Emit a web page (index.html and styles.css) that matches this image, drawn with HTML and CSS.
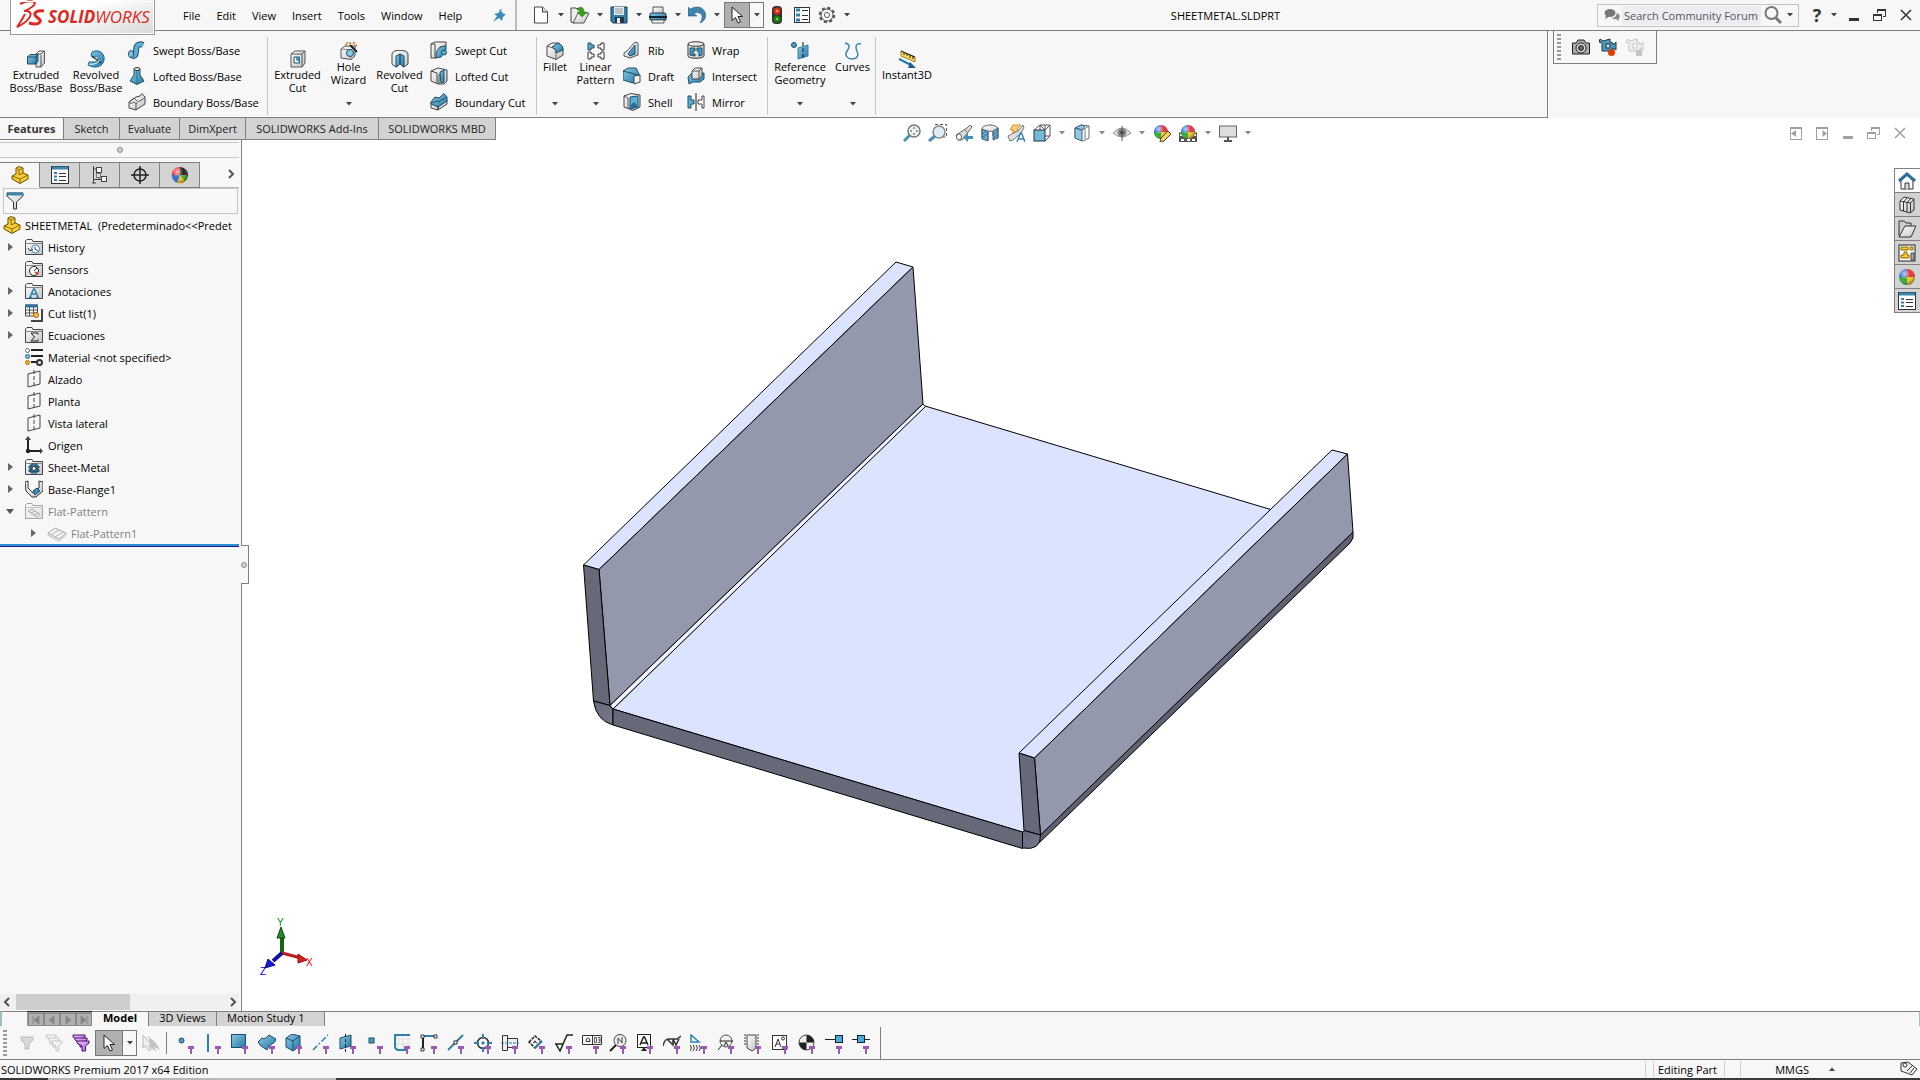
FILE: index.html
```html
<!DOCTYPE html>
<html lang="en">
<head>
<meta charset="utf-8">
<title>SHEETMETAL.SLDPRT</title>
<link rel="stylesheet" href="styles.css">
</head>
<body>
<svg class="sprite" aria-hidden="true">
<defs>
<linearGradient id="gb" x1="0" y1="0" x2="1" y2="1"><stop offset="0" stop-color="#8cc8e4"/><stop offset="1" stop-color="#2478a4"/></linearGradient>
<linearGradient id="gg" x1="0" y1="0" x2="1" y2="1"><stop offset="0" stop-color="#ffffff"/><stop offset="1" stop-color="#c4c4c4"/></linearGradient>
<linearGradient id="gp" x1="0" y1="0" x2="1" y2="1"><stop offset="0" stop-color="#e8c0fa"/><stop offset="1" stop-color="#b060d8"/></linearGradient>
<radialGradient id="shade" cx=".35" cy=".3" r=".75"><stop offset="0" stop-color="#fff" stop-opacity=".7"/><stop offset=".5" stop-color="#fff" stop-opacity="0"/><stop offset="1" stop-color="#000" stop-opacity=".5"/></radialGradient>
<symbol id="funnel" viewBox="0 0 6 8"><path d="M0 0H6V3H4V8H2V3H0Z" fill="#9b59b6"/></symbol>
<symbol id="caret" viewBox="0 0 6 4"><path d="M0 0H6L3 3.500Z" fill="currentColor"/></symbol>
<symbol id="pin" viewBox="0 0 18 18"><path d="M8 4L11 3L10 5L13 8L15 8L12 11L11 15L8 12L2 16L6 10L3 8L7 7L9 5Z" transform="translate(-2 0)" fill="#3c8fb8"/></symbol>
<symbol id="extrude" viewBox="0 0 18 18"><path d="M9 4L12 1H17.500V13L14 17H9Z" fill="url(#gg)" stroke="#555"/><path d="M14 5V17M9 4H14L17 1" fill="none" stroke="#555"/><path d="M.500 7L3 4.500H11L11 11L9 14H.500Z" fill="url(#gb)" stroke="#1c4f6b"/><path d="M.500 7H9V14M9 7L11 4.500" fill="none" stroke="#1c4f6b"/></symbol>
<symbol id="revolve" viewBox="0 0 18 18"><path d="M4 5A4 4 0 0 1 8 1C14 0 18 5 17 10C16 17 8 19 1 15L2 12L7 12C12 12 12 7 9 6L6 8Z" fill="url(#gb)" stroke="#1c6a90"/><path d="M5 6L14 13" stroke="#333" stroke-width="1.500"/><path d="M2 14C6 15 12 13 12 10" stroke="#fff" fill="none"/></symbol>
<symbol id="sweep" viewBox="0 0 18 18"><path d="M3 14C10 18 7 7 9 5C10 3 13 3 15 4" fill="none" stroke="#1c4f6b" stroke-width="6"/><path d="M3 14C10 18 7 7 9 5C10 3 13 3 15 4" fill="none" stroke="#5caed2" stroke-width="4"/><ellipse cx="3" cy="13" rx="2.500" ry="3.500" fill="#8cc8e4" stroke="#1c4f6b"/></symbol>
<symbol id="loft" viewBox="0 0 18 18"><path d="M6 2H12V8L16 14L9 17.500L2 14L6 8Z" fill="url(#gb)" stroke="#1c4f6b"/><path d="M9 4V17" stroke="#2a6f94"/><ellipse cx="9" cy="2" rx="3" ry="1.500" fill="#eee" stroke="#333"/></symbol>
<symbol id="boundary" viewBox="0 0 18 18"><path d="M1 9L8 4L12 3L14 .500L17 4V11L8 17L1 15Z" fill="url(#gg)" stroke="#444"/><path d="M1 9C4 13 6 6 8 11C10 7 13 9 17 4M8 11V17M2 8L6 5L9 8" fill="none" stroke="#555"/></symbol>
<symbol id="cutextrude" viewBox="0 0 18 18"><path d="M2 4L6 1H16V13L13 17H2Z" fill="url(#gg)" stroke="#555"/><path d="M2 4H13V17M13 4L16 1" fill="none" stroke="#555"/><path d="M5 7H10.500V13H5Z" fill="#fff" stroke="#1c4f6b"/><path d="M7 7H10.500V12L7 10Z" fill="#3c90b8"/></symbol>
<symbol id="wizard" viewBox="0 0 18 18"><path d="M1 7L5 4H15V14L11 17.500L1 16Z" fill="url(#gg)" stroke="#555"/><path d="M1 7L11 8V17M11 8L15 4" fill="none" stroke="#888"/><circle cx="10" cy="11" r="3.500" fill="#8cc8e4" stroke="#1c4f6b"/><path d="M10 3L17 10" stroke="#222" stroke-width="2"/><path d="M6 1H8M10 0V2M13 2L15 0M5 3H7M15 4L17 3" stroke="#e07020" stroke-width="1.500"/></symbol>
<symbol id="cutrevolve" viewBox="0 0 18 18"><path d="M1 4C1 -1 17 -1 17 4V14Q15 16 12 17V8L9 6L6 8V17Q2 16 1 14Z" fill="url(#gg)" stroke="#444"/><path d="M5 6L9 4V14L5 17ZM9 4L13 6V17L9 14Z" fill="url(#gb)" stroke="#1c4f6b"/></symbol>
<symbol id="cutsweep" viewBox="0 0 18 18"><path d="M1 3L5 1H16V5L10 6L6 17H1Z" fill="url(#gg)" stroke="#444"/><path d="M6 16C6 9 9 5 16 5V9L11 16L6 17Z" fill="url(#gb)" stroke="#1c4f6b"/><path d="M1 3H5V17" fill="none" stroke="#444"/><circle cx="14" cy="11.500" r="2.500" fill="#5caed2" stroke="#1c4f6b"/></symbol>
<symbol id="cutloft" viewBox="0 0 18 18"><path d="M1 4L8 1L17 3V14L14 17L8 17L1 14Z" fill="url(#gg)" stroke="#444"/><path d="M1 4L7 6V16M12 5L9 8V17" fill="none" stroke="#444"/><path d="M10 5L14 3L14 15L11 16Z" fill="url(#gb)" stroke="#1c4f6b"/></symbol>
<symbol id="cutboundary" viewBox="0 0 18 18"><path d="M1 9L8 14V17L1 15ZM8 14L17 7V11L8 17Z" fill="url(#gg)" stroke="#444"/><path d="M1 9L5 4L9 5L14 .500L17 4V8L8 14L1 11Z" fill="url(#gb)" stroke="#1c4f6b"/><path d="M2 9C5 11 6 6 9 9C11 6 13 7 16 4" fill="none" stroke="#1c4f6b"/></symbol>
<symbol id="fillet" viewBox="0 0 18 18"><path d="M1 4L6 1L12 1Q17 3 17 8V13L10 17.500L1 14Z" fill="url(#gg)" stroke="#444"/><path d="M6 5L12 1Q17 3 17 8L10 11Q10 6 6 5Z" fill="url(#gb)" stroke="#1c4f6b"/><path d="M1 4L7 6Q10 7 10 11V17" fill="none" stroke="#666"/></symbol>
<symbol id="pattern" viewBox="0 0 18 18"><path d="M1 1H4V3H7V6H4V8H1Z" fill="#5caed2" stroke="#1c4f6b"/><path d="M17 1H14V3H11V6H14V8H17ZM1 10H4V12H7V15H4V17H1ZM17 10H14V12H11V15H14V17H17Z" fill="#fff" stroke="#333"/></symbol>
<symbol id="rib" viewBox="0 0 18 18"><path d="M1 12L4 10L12 1L15 2V14L7 17L1 15Z" fill="url(#gg)" stroke="#555"/><path d="M5 13L12 4V13L7 15Z" fill="url(#gb)" stroke="#1c4f6b"/></symbol>
<symbol id="draft" viewBox="0 0 18 18"><path d="M0 4L5 1L13 1L17 9L10 16L0 13Z" fill="url(#gb)" stroke="#1c4f6b"/><path d="M0 4L8 6L17 9" fill="none" stroke="#1c4f6b"/><path d="M11 9L17 8V15L11 17Z" fill="#f4f4f4" stroke="#444"/></symbol>
<symbol id="shell" viewBox="0 0 18 18"><path d="M1 3L8 .500L17 2V14L10 17.500L1 14Z" fill="url(#gg)" stroke="#444"/><path d="M7 4L15 3V14L7 16Z" fill="#5caed2" stroke="#1c4f6b"/><path d="M7 13L11 9L15 14L8 16Z" fill="#246f98"/><path d="M1 3L5 5V16" fill="none" stroke="#555"/></symbol>
<symbol id="wrap" viewBox="0 0 18 18"><path d="M1 3C1 0 17 0 17 3V15C17 18 1 18 1 15Z" fill="url(#gg)" stroke="#333"/><path d="M1 3C1 6 17 6 17 3" fill="none" stroke="#333"/><path d="M3 7H8V10H6V13H8V15L3 14ZM10 7H15V14L12 15V10H10Z" fill="#4c9cc0" stroke="#1c4f6b"/></symbol>
<symbol id="intersect" viewBox="0 0 18 18"><path d="M1 10L5 6H17V12L13 15H6L2 17Z" fill="url(#gb)" stroke="#1c4f6b"/><path d="M5 4L8 1H15V9L12 12H5Z" fill="url(#gg)" stroke="#444"/><path d="M5 4H12V12M12 4L15 1" fill="none" stroke="#555"/></symbol>
<symbol id="mirror" viewBox="0 0 18 18"><path d="M1 3H4V7H7V11H4V15H1Z" fill="#5caed2" stroke="#1c4f6b"/><path d="M17 3H15V7H11V11H15V15H17Z" fill="#fff" stroke="#444"/><path d="M9 0V18" stroke="#222"/></symbol>
<symbol id="refgeo" viewBox="0 0 18 18"><circle cx="3" cy="3" r="2.500" fill="#4c9cc0" stroke="#1c4f6b"/><path d="M7 6L17 3V14L7 17Z" fill="url(#gb)" stroke="#3c80a4"/><path d="M12 0V18" stroke="#111" stroke-dasharray="4 2"/></symbol>
<symbol id="curves" viewBox="0 0 18 18"><path d="M1 1C6 2 6 5 3 9C0 14 4 17 8 17C13 17 15 14 13 9C11 4 12 1 17 2" fill="none" stroke="#3a86b4" stroke-width="1.500"/></symbol>
<symbol id="instant" viewBox="0 0 18 18"><path d="M3 1L17 7V12L3 6Z" fill="#f8d860" stroke="#a08020"/><path d="M3 1L17 7M6 3V5M9 4V6M12 5V8M15 6V9" stroke="#222"/><path d="M1 9L13 15" stroke="#2478a4" stroke-width="2"/><path d="M12 12L18 18H10Z" fill="#1c5f88"/></symbol>
<symbol id="new" viewBox="0 0 18 18"><path d="M2.500 1H10.500L15.500 6V17H2.500Z" fill="#fff" stroke="#444"/><path d="M10.500 1V6H15.500" fill="#ddd" stroke="#444"/></symbol>
<symbol id="open" viewBox="0 0 20 18"><path d="M1 16V2H6L8 4H12V8L4 17Z" fill="#eee" stroke="#444"/><path d="M3 17L8 7H19L14 17Z" fill="url(#gg)" stroke="#555"/><path d="M8 2C12 0 14 2 14 6H17L12 11L7 6H10C10 4 9 3 7 3Z" fill="#38a018" stroke="#207008" stroke-width=".5"/></symbol>
<symbol id="save" viewBox="0 0 18 18"><path d="M1 1H17V17H3L1 15Z" fill="#2f80ac" stroke="#1c3f55"/><rect x="4" y="1" width="10" height="8" fill="#e8eef2"/><path d="M5 3H13M5 5H13M5 7H13" stroke="#999"/><rect x="5" y="11" width="9" height="6" fill="#234"/><rect x="7" y="12" width="3" height="5" fill="#eee"/></symbol>
<symbol id="print" viewBox="0 0 18 18"><path d="M4 8V1H14V8" fill="url(#gg)" stroke="#555"/><path d="M1 8Q1 7 3 7H15Q17 7 17 8V14H1Z" fill="url(#gb)" stroke="#234"/><path d="M0 11H18" stroke="#123" stroke-width="2"/><path d="M3 14H15V17H3Z" fill="#fff" stroke="#555"/></symbol>
<symbol id="undo" viewBox="0 0 18 18"><path d="M0 1L2 3C8 0 14 0 17 6C19 11 16 16 12 17C15 12 15 8 11 7C9 6 7 7 6 8L9 10H0Z" fill="#3c86ae" stroke="#246"  stroke-width=".5"/></symbol>
<symbol id="arrow" viewBox="0 0 18 18"><path d="M4 1V14.500L7.500 11.500L10 17L12.500 16L10 10.500H14.500Z" fill="#fff" stroke="#222"/></symbol>
<symbol id="traffic" viewBox="0 0 18 18"><rect x="4" y="0" width="10" height="18" rx="4" fill="#333"/><circle cx="9" cy="5" r="3.500" fill="#e03010"/><circle cx="9" cy="13" r="3.500" fill="#208010"/><path d="M9 4V6M8 5H10" stroke="#fbb"/><path d="M9 12V14M8 13H10" stroke="#9e9"/></symbol>
<symbol id="list" viewBox="0 0 18 18"><rect x="1.500" y="1.500" width="15" height="15" fill="#fff" stroke="#333"/><path d="M3 4H7M3 9H7M3 14H7" stroke="#2f80ac" stroke-width="3"/><path d="M9 4.500H15M9 9.500H15M9 13.500H15" stroke="#333"/></symbol>
<symbol id="props" viewBox="0 0 18 18"><rect x=".5" y=".5" width="17" height="17" fill="#fff" stroke="#333"/><path d="M1 2H17" stroke="#3c86ae" stroke-width="3"/><path d="M3 7H6M3 10.500H6M3 14H6" stroke="#2f80ac" stroke-width="2"/><path d="M8 7.500H15M8 10.500H15M8 14.500H15" stroke="#333"/></symbol>
<symbol id="gear" viewBox="0 0 18 18"><circle cx="9" cy="9" r="7" fill="none" stroke="#555" stroke-width="2.500" stroke-dasharray="3.100 2.400"/><circle cx="9" cy="9" r="6" fill="#f7f7f7" stroke="#555"/><circle cx="9" cy="9" r="2.500" fill="#fff" stroke="#555"/></symbol>
<symbol id="chat" viewBox="0 0 18 18"><ellipse cx="7" cy="7" rx="5.500" ry="4" fill="#777"/><path d="M3 9L2 13L7 10Z" fill="#777"/><path d="M14 7C18 9 17 12 15.500 12.500L16 15L13 13Q10 13.500 8.500 12Q13 12 14 7Z" fill="#888"/></symbol>
<symbol id="search" viewBox="0 0 18 18"><circle cx="7.500" cy="7" r="6" fill="none" stroke="#777" stroke-width="2"/><path d="M12 12L17 17" stroke="#777" stroke-width="3"/></symbol>
<symbol id="min" viewBox="0 0 18 18"><path d="M4 13.500H14" stroke="currentColor" stroke-width="3"/></symbol>
<symbol id="restore" viewBox="0 0 18 18"><path d="M6.500 7V3.500H14.500V10.500H12" fill="none" stroke="currentColor"/><path d="M6 4H15" stroke="currentColor" stroke-width="2"/><rect x="2.500" y="8.500" width="8" height="6" fill="none" stroke="currentColor"/><path d="M2 9H11" stroke="currentColor" stroke-width="2"/></symbol>
<symbol id="close" viewBox="0 0 18 18"><path d="M4 4L14 14M14 4L4 14" stroke="currentColor" stroke-width="1.500"/></symbol>
<symbol id="paneleft" viewBox="0 0 18 18"><rect x="3.500" y="3.500" width="11" height="12" fill="none" stroke="currentColor"/><path d="M3 4H15" stroke="currentColor" stroke-width="2"/><path d="M9 6V13L4 9.500Z" fill="currentColor"/></symbol>
<symbol id="paneright" viewBox="0 0 18 18"><rect x="3.500" y="3.500" width="11" height="12" fill="none" stroke="currentColor"/><path d="M3 4H15" stroke="currentColor" stroke-width="2"/><path d="M9.500 6V13L14 9.500Z" fill="currentColor"/></symbol>
<symbol id="camera" viewBox="0 0 18 18"><path d="M.500 5H4L6 2H12L14 5H17.500V16H.500Z" fill="#aaa" stroke="#222"/><circle cx="9" cy="10" r="5" fill="#ddd" stroke="#222"/><circle cx="9" cy="10" r="2.500" fill="#667" stroke="#222"/></symbol>
<symbol id="record" viewBox="0 0 18 18"><path d="M1 1L4 3L11 1V4L14 5V7L17 4V12L14 10V13H3V5L0 4Z" fill="#4c9cc0" stroke="#234"/><rect x="7" y="6" width="4" height="4" fill="#bde" stroke="#234"/><circle cx="12.500" cy="14.500" r="3.500" fill="#e63c00"/></symbol>
<symbol id="recordoff" viewBox="0 0 18 18"><path d="M1 1L4 3L11 1V4L14 5V7L17 4V12L14 10V13H3V5L0 4Z" fill="#eee" stroke="#c4c4c4"/><rect x="7" y="6" width="4" height="4" fill="#fff" stroke="#c4c4c4"/><rect x="10" y="12" width="6" height="6" fill="#c4c4c4"/></symbol>
<symbol id="zoomfit" viewBox="0 0 18 18"><circle cx="11" cy="7" r="6" fill="#f4f8fa" stroke="#777" stroke-width="1.500"/><path d="M1 17L7 11" stroke="#4890b4" stroke-width="3"/><path d="M9.500 4.500L11 3L12.500 4.500ZM9.500 9.500L11 11L12.500 9.500ZM8.500 5.500L7 7L8.500 8.500ZM13.500 5.500L15 7L13.500 8.500Z" fill="#444"/></symbol>
<symbol id="zoomarea" viewBox="0 0 20 18"><path d="M7 .500H18.500V13H14" fill="none" stroke="#555" stroke-dasharray="3 2"/><circle cx="11" cy="8" r="6" fill="#e0ebf2" stroke="#888" stroke-width="1.500"/><path d="M1 17L7 12" stroke="#4890b4" stroke-width="3"/></symbol>
<symbol id="prevview" viewBox="0 0 18 18"><path d="M1 11L12 4L15 1L17 3L14 7L7 16L3 16Z" fill="#ddd" stroke="#666"/><ellipse cx="4" cy="13" rx="2.500" ry="3" fill="#fff" stroke="#666"/><path d="M10 6L13 9" stroke="#666"/><path d="M18 15H13V18L8 13.500L13 9V12H18Z" fill="#4090b8"/></symbol>
<symbol id="section" viewBox="0 0 18 18"><path d="M1 4C4 0 14 0 17 4V14L12 12V8Q9 6 7 8V16L1 14Z" fill="url(#gg)" stroke="#666"/><path d="M1 5L7 7V17L1 15ZM12 7L17 4V14L12 16Z" fill="#60acd0" stroke="#336" stroke-width=".7"/><path d="M1 10L5 7M1 14L7 9M12 11L17 6M12 15L17 10" stroke="#357" stroke-width=".8"/></symbol>
<symbol id="dynview" viewBox="0 0 18 18"><path d="M6 1H14L10 5L13 6L5 9L7 6H3Z" fill="#f8d080" stroke="#e09030"/><path d="M1 12L11 7L16 1L17 4L13 10L6 16L3 17Z" fill="url(#gg)" stroke="#777"/><path d="M10 18L13.500 9H14.500L18 18M11.500 15H17" fill="none" stroke="#3c86ae" stroke-width="1.500"/></symbol>
<symbol id="orient" viewBox="0 0 18 18"><path d="M1 6L7 1H17V12L12 17M7 1V6M17 1L12 6M12 12H17M7 1L12 6M12 1V6" fill="none" stroke="#555"/><rect x="1" y="6" width="11" height="11" fill="#78b8d8" stroke="#234"/></symbol>
<symbol id="cube" viewBox="0 0 18 18"><path d="M2 4L8 1L16 2V14L10 17L2 14Z" fill="#fff" stroke="#666"/><path d="M2 4L9 6V17L2 14ZM2 4L8 1L12 2L9 6Z" fill="#90c8e0" stroke="#468"/><path d="M9 6L16 2M12 5V15" stroke="#777"/></symbol>
<symbol id="eye" viewBox="0 0 20 18"><path d="M1 9Q10 -1 19 9Q10 17 1 9Z" fill="#ddd" stroke="#999"/><circle cx="10" cy="8.500" r="4.500" fill="#888"/><circle cx="10" cy="8.500" r="2" fill="#444"/><path d="M10 2V17" stroke="#555"/></symbol>
<symbol id="ball" viewBox="0 0 18 18"><path d="M9 9V1A8 8 0 0 0 1 9Z" fill="#2868d8"/><path d="M9 9H17A8 8 0 0 0 9 1Z" fill="#e83030"/><path d="M9 9H1A8 8 0 0 0 9 17Z" fill="#30a838"/><path d="M9 9V17A8 8 0 0 0 17 9Z" fill="#f4c820"/><circle cx="9" cy="9" r="8" fill="url(#shade)"/></symbol>
<symbol id="balldark" viewBox="0 0 18 18"><path d="M9 9L9 1A8 8 0 0 0 1 11Z" fill="#e83030"/><path d="M9 9L17 10A8 8 0 0 0 9 1Z" fill="#222"/><path d="M9 9L1 9A8 8 0 0 0 7 17Z" fill="#2868d8"/><path d="M9 9L6 17A8 8 0 0 0 17 10Z" fill="#f4c820"/><path d="M9 9L17 10A8 8 0 0 1 14 15Z" fill="#30a838"/><circle cx="9" cy="9" r="8" fill="url(#shade)"/></symbol>
<symbol id="ballpencil" viewBox="0 0 18 18"><use href="#ball" x="0" y="0" width="16" height="16"/><path d="M8 14L15 7L18 10L11 17L7 18Z" fill="#f8d050" stroke="#444"/></symbol>
<symbol id="scene" viewBox="0 0 18 18"><path d="M0 8.500H18V18H0Z" fill="#555"/><path d="M1 11H3M15 11H17M2 16H5M8 16H11M13 16H16" stroke="#fff" stroke-width="2"/><use href="#ball" x="1" y="0" width="16" height="16"/></symbol>
<symbol id="monitor" viewBox="0 0 18 18"><rect x=".5" y="2" width="17" height="11" fill="#ddd" stroke="#666"/><path d="M9 13V16M5 17H13" stroke="#555" stroke-width="2"/></symbol>
<symbol id="part" viewBox="0 0 18 18"><path d="M1 10L5 8V2L8 .500L12 2V7L17 9V13L9 17.500L1 13Z" fill="#f8cc38" stroke="#6c5000"/><path d="M5 2L8 4V9L12 7M8 4L12 2M1 10L9 13L17 9M9 13V17" fill="none" stroke="#8a6a08"/></symbol>
<symbol id="config" viewBox="0 0 18 18"><path d="M2.500 0V17M2.500 3H8M2.500 13.500H10M8 3V13M1 17H5" fill="none" stroke="#444"/><rect x="5.500" y="1.500" width="5" height="5" fill="#fff" stroke="#444"/><rect x="5.500" y="7.500" width="4" height="4" fill="#ddd" stroke="#777"/><rect x="10.500" y="10.500" width="5" height="5" fill="#fff" stroke="#444"/></symbol>
<symbol id="target" viewBox="0 0 18 18"><circle cx="9" cy="9" r="6" fill="none" stroke="#222" stroke-width="1.500"/><path d="M9 0V18M0 9H18" stroke="#222" stroke-width="1.500"/></symbol>
<symbol id="funnelbig" viewBox="0 0 18 18"><path d="M1 1H17V4L10.500 10V17H7.500V10L1 4Z" fill="url(#gg)" stroke="#333"/><path d="M1 2H17" stroke="#3c86ae" stroke-width="3"/></symbol>
<symbol id="folder" viewBox="0 0 18 18"><path d="M.500 16.500V3L2 1.500H7L8 3.500H17.500V16.500Z" fill="url(#gg)" stroke="#444"/><path d="M.500 5.500H17.500" stroke="#888"/></symbol>
<symbol id="history" viewBox="0 0 18 18"><use href="#folder"/><circle cx="10.500" cy="11" r="4" fill="#fff" stroke="#3c86ae"/><path d="M10 9V11L13 13M3 10L5 13L8 11" stroke="#246" fill="none"/></symbol>
<symbol id="sensor" viewBox="0 0 18 18"><use href="#folder"/><circle cx="9" cy="11" r="4.500" fill="#fff" stroke="#222"/><path d="M9 11L12 8" stroke="#333"/><path d="M10 12L13 14" stroke="#e04010" stroke-width="2"/></symbol>
<symbol id="annot" viewBox="0 0 18 18"><use href="#folder"/><path d="M5 15L8.500 7H9.500L13 15M6.500 12H12M4 15.500H7M11 15.500H14" fill="none" stroke="#2f80ac" stroke-width="1.500"/></symbol>
<symbol id="cutlist" viewBox="0 0 18 18"><path d="M.500 1H12.500V12H.500Z" fill="#fff" stroke="#444"/><path d="M0 2H13" stroke="#2f6f98" stroke-width="3"/><path d="M1 6H12M1 9H12M4.500 3V12M8.500 3V12" stroke="#555"/><path d="M6 17H17V5" fill="none" stroke="#444" stroke-width="2"/><circle cx="11" cy="11" r="2.500" fill="#f8c040" stroke="#b06010"/></symbol>
<symbol id="equation" viewBox="0 0 18 18"><use href="#folder"/><path d="M13 8.500V7H6L9.500 11L6 15H13V13.500" fill="none" stroke="#222"/></symbol>
<symbol id="material" viewBox="0 0 18 18"><path d="M6 2H18M6 8H18M6 14H12" stroke="#222" stroke-width="2"/><circle cx="2.500" cy="2.500" r="2" fill="#fff" stroke="#666"/><circle cx="2.500" cy="8.500" r="2" fill="#78c0e0" stroke="#368"/><circle cx="2.500" cy="14.500" r="2" fill="#f8b818" stroke="#a60"/><circle cx="14.500" cy="14.500" r="2.500" fill="none" stroke="#333" stroke-width="2"/></symbol>
<symbol id="plane" viewBox="0 0 18 18"><path d="M3 4L15 1V14L3 17Z" fill="none" stroke="#444"/><path d="M9 0V18" stroke="#444" stroke-dasharray="4 2"/></symbol>
<symbol id="origin" viewBox="0 0 18 18"><path d="M3 2V15H16" fill="none" stroke="#222" stroke-width="2"/><path d="M0 4L3 0L6 4ZM15 12L18 15L15 18Z" fill="#444"/><circle cx="3" cy="15" r="2.200" fill="#222"/></symbol>
<symbol id="sheetmetal" viewBox="0 0 18 18"><use href="#folder"/><path d="M6 6H12V15H6ZM4 8H14V10H4ZM4 11.500H14V13.500H4Z" fill="#4c9cc0" stroke="#1c4f6b"/><circle cx="9" cy="10.500" r="2" fill="#fff" stroke="#333"/></symbol>
<symbol id="flange" viewBox="0 0 18 18"><path d="M0 2L3 1V8L8 13L14 8V1L18 2V11L11 17H7L1 11Z" fill="url(#gg)" stroke="#333"/><path d="M8 11L12 8L15 11L10 15Z" fill="#3c90b8" stroke="#1c4f6b"/></symbol>
<symbol id="flatfolder" viewBox="0 0 18 18"><g opacity=".45"><use href="#folder"/><path d="M3 9L7 7L15 12L12 15Z" fill="#ddd" stroke="#555"/><path d="M6 11L10 9M9 13L13 11" stroke="#555"/></g></symbol>
<symbol id="flat" viewBox="0 0 20 18"><g opacity=".5"><path d="M1 9L8 4L19 9L12 15Z" fill="#eee" stroke="#666"/><path d="M4 11L12 6M8 13L16 8M1 9V11L12 17L19 11V9" fill="none" stroke="#777"/></g></symbol>
<symbol id="home" viewBox="0 0 18 18"><path d="M3 9V17H15V9L9 3Z" fill="#fff" stroke="#333"/><path d="M1 9L9 2L17 9" fill="none" stroke="#2f6f98" stroke-width="3"/><path d="M7 17V11H11V17" fill="#ddd" stroke="#333"/></symbol>
<symbol id="books" viewBox="0 0 18 18"><path d="M2 5L6 1L16 3V14L12 17L2 14Z" fill="url(#gg)" stroke="#333"/><path d="M5.500 6V15M9 7V16M12.500 7V17M5.500 6L9 2M9 7L12 3M12.500 7L16 3M2 5L12.500 7" fill="none" stroke="#333"/></symbol>
<symbol id="folderopen" viewBox="0 0 18 18"><path d="M1 16V1H6L8 3H13V7" fill="#ccc" stroke="#333"/><path d="M1 17L7 6H18L13 17Z" fill="url(#gg)" stroke="#333"/></symbol>
<symbol id="palette" viewBox="0 0 18 18"><rect x="1" y="1" width="16" height="16" fill="#fff" stroke="#222"/><path d="M3 3H10V6H3ZM12 3H15V6H12ZM3 14V11H6V8H9V11H11V14Z" fill="#f8cc28" stroke="#8a6a08"/><path d="M13 9H16V16H13Z" fill="#aaa" stroke="#444"/></symbol>
<symbol id="chev-l" viewBox="0 0 18 18"><path d="M10 5L6 9L10 13" fill="none" stroke="#555" stroke-width="2"/></symbol>
<symbol id="chev-r" viewBox="0 0 18 18"><path d="M9 5L13 9L9 13" fill="none" stroke="#555" stroke-width="2"/></symbol>
<symbol id="tag" viewBox="0 0 18 18"><path d="M1 3L8 2L17 9L12 15L1 11Z" fill="#eee" stroke="#333"/><circle cx="5" cy="5" r="2" fill="#fff" stroke="#333"/><path d="M7 11L12 6M10 13L14 8" stroke="#333"/></symbol>
<symbol id="f1" viewBox="0 0 18 18"><path d="M3 3H15V6L11 10V15H7V10L3 6Z" fill="#d8d8d8" stroke="#bbb"/></symbol>
<symbol id="f3" viewBox="0 0 18 18"><g fill="#f4f4f4" stroke="#c4c4c4"><path d="M1 1H11V3L7.500 6V10H5V6L1 3Z"/><path d="M4 4H14V6L10.500 9V13H8V9L4 6Z"/><path d="M7 7H17V9L13.500 12V17H11V12L7 9Z"/></g></symbol>
<symbol id="f3p" viewBox="0 0 18 18"><g fill="url(#gp)" stroke="#4c1070"><path d="M1 1H13V3L8.500 6V10H6V6L1 3Z"/><path d="M3 4H15V6L10.500 9V13H8V9L3 6Z"/><path d="M5 7H17V9L13.500 12V17H10V12L5 9Z"/></g></symbol>
<symbol id="arrowsoff" viewBox="0 0 18 18"><path d="M1 1V14L4 12L7 17L9 16L7 11H10Z" fill="#eee" stroke="#bbb"/><path d="M6 2L14 9L18 16L12 13L15 18L9 14Z" fill="#c4c4c4"/></symbol>
<symbol id="s-point" viewBox="0 0 18 18"><circle cx="4.500" cy="6.500" r="2.500" fill="#4c9cc0" stroke="#1c4f6b"/></symbol>
<symbol id="s-line" viewBox="0 0 18 18"><path d="M4 0V18" stroke="#2f80ac" stroke-width="2"/></symbol>
<symbol id="s-rect" viewBox="0 0 18 18"><rect x=".5" y=".5" width="14" height="13" fill="url(#gb)" stroke="#1c4f6b"/></symbol>
<symbol id="s-surf" viewBox="0 0 18 18"><path d="M0 8L4 4Q7 6 11 1L18 5Q17 9 14 10Q10 11 9 16L3 12Z" fill="url(#gb)" stroke="#1c4f6b"/></symbol>
<symbol id="s-solid" viewBox="0 0 18 18"><path d="M1 4L7 0L15 2V12L8 17L1 13Z" fill="url(#gb)" stroke="#1c4f6b"/><path d="M1 4L8 7V17M8 7L15 2" fill="none" stroke="#1c4f6b"/></symbol>
<symbol id="s-axis" viewBox="0 0 18 18"><path d="M1 16L16 1" stroke="#2f80ac" stroke-width="1.500" stroke-dasharray="6 2 2 2"/></symbol>
<symbol id="s-plane" viewBox="0 0 18 18"><path d="M1 4L12 1V12L1 15Z" fill="url(#gb)" stroke="#1c4f6b"/><path d="M6.500 0V18" stroke="#123" stroke-dasharray="3 2"/></symbol>
<symbol id="s-sq" viewBox="0 0 18 18"><rect x="3" y="4" width="5" height="5" fill="#4c9cc0" stroke="#1c4f6b"/></symbol>
<symbol id="s-sketch" viewBox="0 0 18 18"><path d="M0 5H18M0 10H18M5 0V18M10 0V18M15 0V18" stroke="#ddd"/><path d="M17 1H2V12Q2 16 6 16H15" fill="none" stroke="#2f80ac" stroke-width="2"/></symbol>
<symbol id="s-seg" viewBox="0 0 18 18"><path d="M3 15V3" stroke="#222" stroke-width="2"/><path d="M3 2H16" stroke="#2f80ac" stroke-width="2"/><path d="M1 1H4V4H1ZM14 1H17V4H14ZM1 14H4V17H1Z" fill="#fff" stroke="#333"/></symbol>
<symbol id="s-mid" viewBox="0 0 18 18"><path d="M1 16L16 1" stroke="#2f80ac" stroke-width="2"/><rect x="7" y="7" width="3" height="3" fill="#fff" stroke="#333"/></symbol>
<symbol id="s-center" viewBox="0 0 18 18"><circle cx="9" cy="9" r="5.500" fill="none" stroke="#333" stroke-width="1.500"/><path d="M9 0V5M9 13V18M0 9H5M13 9H18M7.500 9H10.500M9 7.500V10.500" stroke="#2f80ac" stroke-width="2"/></symbol>
<symbol id="s-cl" viewBox="0 0 18 18"><path d="M1.500 1.500H6.500V16.500H1.500ZM6.500 4.500H16.500V13.500H6.500" fill="#eee" stroke="#333"/><path d="M0 9H18" stroke="#2f80ac" stroke-dasharray="3 1"/></symbol>
<symbol id="s-dim" viewBox="0 0 18 18"><path d="M1 8L7 2L13 7L7 14Z" fill="none" stroke="#222" stroke-width="1.500" stroke-dasharray="3 1"/><path d="M7 14L14 7" stroke="#2f80ac" stroke-width="2"/><path d="M6 7L9 9M5 9L8 7" stroke="#222"/></symbol>
<symbol id="s-finish" viewBox="0 0 18 18"><path d="M0 10H8M1 10L5 17L12 1H18" fill="none" stroke="#222" stroke-width="1.500"/></symbol>
<symbol id="s-gtol" viewBox="0 0 20 18"><path d="M.500 1.500H19.500V10.500H.500ZM10.500 1V10M4 7.500H8Q8 4 6 4Q4 4 4 7" fill="none" stroke="#333"/><path d="M12.500 3.500H14.500V8.500H12.500ZM16 3.500H18V8.500H16M16 6H18" fill="none" stroke="#333" stroke-width=".8"/></symbol>
<symbol id="s-note" viewBox="0 0 18 18"><circle cx="11" cy="6.500" r="6" fill="#eee" stroke="#444"/><path d="M1 17L7 11" stroke="#222" stroke-width="2"/><path d="M9 10V4L13 9V3" fill="none" stroke="#444"/></symbol>
<symbol id="s-datum" viewBox="0 0 18 18"><rect x="1.500" y=".5" width="13" height="13" fill="#fff" stroke="#222"/><path d="M4 11L7.500 3H8.500L12 11M5 9H11" fill="none" stroke="#222" stroke-width="1.500"/><path d="M8 13L11 17H5Z" fill="#222"/></symbol>
<symbol id="s-weld" viewBox="0 0 18 18"><path d="M0 12C2 4 4 6 5 5H14L18 2M5 5V6L10 11V5L13 11L16 5" fill="none" stroke="#333" stroke-width="1.500"/></symbol>
<symbol id="s-bead" viewBox="0 0 18 18"><path d="M1 1V8H9Z" fill="#fff" stroke="#2f80ac" stroke-width="1.500"/><path d="M0 11Q3 14 0 17M3 11Q6 14 3 17M6 11Q9 14 6 17M9 11Q12 14 9 17" fill="none" stroke="#333"/></symbol>
<symbol id="s-dtarget" viewBox="0 0 18 18"><circle cx="9" cy="7" r="6" fill="#eee" stroke="#555"/><path d="M3 7H16M1 16L5 11M7 12L9 8L11 12" fill="none" stroke="#222"/></symbol>
<symbol id="s-thread" viewBox="0 0 18 18"><path d="M3 1H12V14L8 17L3 14Z" fill="url(#gg)" stroke="#444"/><path d="M1 0V12M14 0V12" stroke="#333" stroke-dasharray="2 1"/></symbol>
<symbol id="s-block" viewBox="0 0 18 18"><rect x="1.500" y="1.500" width="14" height="14" fill="#fff" stroke="#333"/><path d="M4 13L7 5L10 13M5 10H9" fill="none" stroke="#333"/><circle cx="12" cy="4.500" r="1.500" fill="none" stroke="#333"/></symbol>
<symbol id="s-com" viewBox="0 0 18 18"><circle cx="8.500" cy="8.500" r="7.500" fill="#eee" stroke="#444"/><path d="M8.500 8.500V1A7.500 7.500 0 0 1 16 8.500ZM8.500 8.500V16A7.500 7.500 0 0 1 1 8.500Z" fill="#222"/></symbol>
<symbol id="s-end" viewBox="0 0 18 18"><path d="M0 5.500H10" stroke="#222"/><rect x="10.500" y="1.500" width="7" height="7" fill="#4cacd8" stroke="#123"/></symbol>
<symbol id="s-through" viewBox="0 0 18 18"><path d="M0 5.500H18" stroke="#222"/><rect x="5.500" y="1.500" width="7" height="7" fill="#4cacd8" stroke="#123"/></symbol>
<symbol id="ds" viewBox="0 0 30 30"><path d="M5 4C11 1 18 0 20 3C20 6 14 9 10 11" fill="none" stroke="#dd2a1e" stroke-width="2"/><path d="M9 11C20 10 17 20 2 27C5 23 8 18 10 14" fill="none" stroke="#dd2a1e" stroke-width="2"/><path d="M29 11C23 10 19 12 20 15C21 18 27 19 25 22C23 25 18 24 14 23" fill="none" stroke="#dd2a1e" stroke-width="3"/></symbol>
</defs>
</svg>

<header class="titlebar">
  <div class="logo"><svg class="logo-mark"><use href="#ds"/></svg><span><b>SOLID</b>WORKS</span></div>
  <nav class="menu"><button>File</button><button>Edit</button><button>View</button><button>Insert</button><button>Tools</button><button>Window</button><button>Help</button></nav>
  <button class="pin" aria-label="Pin menu"><svg class="i"><use href="#pin"/></svg></button>
  <div class="quick">
    <button class="q" aria-label="New"><svg class="i"><use href="#new"/></svg></button><button class="dd" aria-label="New options"><svg class="c"><use href="#caret"/></svg></button>
    <button class="q" aria-label="Open"><svg class="i i20"><use href="#open"/></svg></button><button class="dd" aria-label="Open options"><svg class="c"><use href="#caret"/></svg></button>
    <button class="q" aria-label="Save"><svg class="i"><use href="#save"/></svg></button><button class="dd" aria-label="Save options"><svg class="c"><use href="#caret"/></svg></button>
    <button class="q" aria-label="Print"><svg class="i"><use href="#print"/></svg></button><button class="dd" aria-label="Print options"><svg class="c"><use href="#caret"/></svg></button>
    <button class="q" aria-label="Undo"><svg class="i"><use href="#undo"/></svg></button><button class="dd" aria-label="Undo options"><svg class="c"><use href="#caret"/></svg></button>
    <span class="split"><button class="on" aria-label="Select"><svg class="i"><use href="#arrow"/></svg></button><button class="more" aria-label="Select options"><svg class="c"><use href="#caret"/></svg></button></span>
    <button class="q wide" aria-label="Rebuild"><svg class="i"><use href="#traffic"/></svg></button>
    <button class="q wide" aria-label="File properties"><svg class="i"><use href="#list"/></svg></button>
    <button class="q wide" aria-label="Options"><svg class="i"><use href="#gear"/></svg></button><button class="dd" aria-label="More options"><svg class="c"><use href="#caret"/></svg></button>
  </div>
  <h1 class="doc-title">SHEETMETAL.SLDPRT</h1>
  <form class="search"><svg class="i"><use href="#chat"/></svg><input type="text" placeholder="Search Community Forum" aria-label="Search Community Forum"><button type="button" aria-label="Search"><svg class="i"><use href="#search"/></svg></button><button type="button" aria-label="Search options"><svg class="c"><use href="#caret"/></svg></button></form>
  <div class="wincontrols">
    <button class="help">?</button><button class="dd" aria-label="Help options"><svg class="c"><use href="#caret"/></svg></button>
    <button aria-label="Minimize"><svg class="i"><use href="#min"/></svg></button><button aria-label="Restore"><svg class="i"><use href="#restore"/></svg></button><button aria-label="Close"><svg class="i"><use href="#close"/></svg></button>
  </div>
</header>

<div class="ribbon-row">
  <section class="ribbon" aria-label="Features">
    <div class="group g1">
      <button class="big w60"><svg class="i"><use href="#extrude"/></svg><span>Extruded<br>Boss/Base</span></button>
      <button class="big w60"><svg class="i"><use href="#revolve"/></svg><span>Revolved<br>Boss/Base</span></button>
      <div class="stack">
        <button><svg class="i"><use href="#sweep"/></svg>Swept Boss/Base</button>
        <button><svg class="i"><use href="#loft"/></svg>Lofted Boss/Base</button>
        <button><svg class="i"><use href="#boundary"/></svg>Boundary Boss/Base</button>
      </div>
    </div>
    <div class="group g2">
      <button class="big w51"><svg class="i"><use href="#cutextrude"/></svg><span>Extruded<br>Cut</span></button>
      <button class="big drop w51"><svg class="i"><use href="#wizard"/></svg><span>Hole<br>Wizard</span><svg class="c"><use href="#caret"/></svg></button>
      <button class="big w51"><svg class="i"><use href="#cutrevolve"/></svg><span>Revolved<br>Cut</span></button>
      <div class="stack">
        <button><svg class="i"><use href="#cutsweep"/></svg>Swept Cut</button>
        <button><svg class="i"><use href="#cutloft"/></svg>Lofted Cut</button>
        <button><svg class="i"><use href="#cutboundary"/></svg>Boundary Cut</button>
      </div>
    </div>
    <div class="group g3">
      <button class="big drop w36"><svg class="i"><use href="#fillet"/></svg><span>Fillet</span><svg class="c"><use href="#caret"/></svg></button>
      <button class="big drop w45"><svg class="i"><use href="#pattern"/></svg><span>Linear<br>Pattern</span><svg class="c"><use href="#caret"/></svg></button>
      <div class="stack s64">
        <button><svg class="i"><use href="#rib"/></svg>Rib</button>
        <button><svg class="i"><use href="#draft"/></svg>Draft</button>
        <button><svg class="i"><use href="#shell"/></svg>Shell</button>
      </div>
      <div class="stack">
        <button><svg class="i"><use href="#wrap"/></svg>Wrap</button>
        <button><svg class="i"><use href="#intersect"/></svg>Intersect</button>
        <button><svg class="i"><use href="#mirror"/></svg>Mirror</button>
      </div>
    </div>
    <div class="group g4">
      <button class="big drop w60"><svg class="i"><use href="#refgeo"/></svg><span>Reference<br>Geometry</span><svg class="c"><use href="#caret"/></svg></button>
      <button class="big drop w45"><svg class="i"><use href="#curves"/></svg><span>Curves</span><svg class="c"><use href="#caret"/></svg></button>
    </div>
    <div class="group last">
      <button class="big w60"><svg class="i"><use href="#instant"/></svg><span>Instant3D</span></button>
    </div>
  </section>
  <div class="capture">
    <span class="grip"></span>
    <button aria-label="Image capture"><svg class="i"><use href="#camera"/></svg></button>
    <button aria-label="Record video"><svg class="i"><use href="#record"/></svg></button>
    <button aria-label="Stop recording" disabled><svg class="i"><use href="#recordoff"/></svg></button>
  </div>
</div>

<main class="work">
  <nav class="tabs"><button class="active t63">Features</button><button class="t56">Sketch</button><button class="t60">Evaluate</button><button class="t66">DimXpert</button><button class="t133">SOLIDWORKS Add-Ins</button><button class="t117">SOLIDWORKS MBD</button></nav>
  <div class="heads-up">
    <button aria-label="Zoom to fit"><svg class="i"><use href="#zoomfit"/></svg></button>
    <button aria-label="Zoom to area"><svg class="i i20"><use href="#zoomarea"/></svg></button>
    <button aria-label="Previous view"><svg class="i"><use href="#prevview"/></svg></button>
    <button aria-label="Section view"><svg class="i"><use href="#section"/></svg></button>
    <button aria-label="Dynamic annotation views"><svg class="i"><use href="#dynview"/></svg></button>
    <button aria-label="View orientation"><svg class="i"><use href="#orient"/></svg></button><button class="dd" aria-label="More orientations"><svg class="c"><use href="#caret"/></svg></button>
    <button aria-label="Display style"><svg class="i"><use href="#cube"/></svg></button><button class="dd" aria-label="More styles"><svg class="c"><use href="#caret"/></svg></button>
    <button aria-label="Hide or show items"><svg class="i i20"><use href="#eye"/></svg></button><button class="dd" aria-label="More items"><svg class="c"><use href="#caret"/></svg></button>
    <button aria-label="Edit appearance"><svg class="i"><use href="#ballpencil"/></svg></button>
    <button aria-label="Apply scene"><svg class="i"><use href="#scene"/></svg></button><button class="dd" aria-label="More scenes"><svg class="c"><use href="#caret"/></svg></button>
    <button aria-label="View settings"><svg class="i"><use href="#monitor"/></svg></button><button class="dd" aria-label="More settings"><svg class="c"><use href="#caret"/></svg></button>
  </div>
  <div class="doc-controls">
    <button aria-label="Collapse left"><svg class="i"><use href="#paneleft"/></svg></button><button aria-label="Collapse right"><svg class="i"><use href="#paneright"/></svg></button><button aria-label="Minimize document"><svg class="i"><use href="#min"/></svg></button><button aria-label="Restore document"><svg class="i"><use href="#restore"/></svg></button><button aria-label="Close document"><svg class="i"><use href="#close"/></svg></button>
  </div>
  <div class="split-view">
    <aside class="panel">
      <div class="panel-grip"><i class="dot"></i></div>
      <div class="panel-tabs">
        <button class="active" aria-label="Feature tree"><svg class="i"><use href="#part"/></svg></button><button aria-label="Properties"><svg class="i"><use href="#props"/></svg></button><button aria-label="Configurations"><svg class="i"><use href="#config"/></svg></button><button aria-label="DimXpert manager"><svg class="i"><use href="#target"/></svg></button><button aria-label="Display manager"><svg class="i"><use href="#balldark"/></svg></button>
        <button class="next" aria-label="More tabs"><svg class="i"><use href="#chev-r"/></svg></button>
      </div>
      <label class="filter"><svg class="i"><use href="#funnelbig"/></svg><input type="text" aria-label="Filter tree"></label>
      <ul class="tree">
        <li class="root"><svg class="i"><use href="#part"/></svg>SHEETMETAL  (Predeterminado&lt;&lt;Predet</li>
        <li class="kids"><svg class="i"><use href="#history"/></svg>History</li>
        <li><svg class="i"><use href="#sensor"/></svg>Sensors</li>
        <li class="kids"><svg class="i"><use href="#annot"/></svg>Anotaciones</li>
        <li class="kids"><svg class="i"><use href="#cutlist"/></svg>Cut list(1)</li>
        <li class="kids"><svg class="i"><use href="#equation"/></svg>Ecuaciones</li>
        <li><svg class="i"><use href="#material"/></svg>Material &lt;not specified&gt;</li>
        <li><svg class="i"><use href="#plane"/></svg>Alzado</li>
        <li><svg class="i"><use href="#plane"/></svg>Planta</li>
        <li><svg class="i"><use href="#plane"/></svg>Vista lateral</li>
        <li><svg class="i"><use href="#origin"/></svg>Origen</li>
        <li class="kids"><svg class="i"><use href="#sheetmetal"/></svg>Sheet-Metal</li>
        <li class="kids"><svg class="i"><use href="#flange"/></svg>Base-Flange1</li>
        <li class="kids open off"><svg class="i"><use href="#flatfolder"/></svg>Flat-Pattern</li>
        <li class="kids off child"><svg class="i i20"><use href="#flat"/></svg>Flat-Pattern1</li>
      </ul>
      <div class="rollback"></div>
      <div class="hscroll"><button aria-label="Scroll left"><svg class="i"><use href="#chev-l"/></svg></button><span class="track"><span class="thumb"></span></span><button aria-label="Scroll right"><svg class="i"><use href="#chev-r"/></svg></button></div>
      <div class="handle"><i class="dot"></i></div>
    </aside>
    <section class="viewport" aria-label="Model view">
      <svg class="model" viewBox="242 140 1678 871" role="img" aria-label="Sheet metal channel">
        <defs><linearGradient id="bend" x1="0" y1="0" x2="1" y2="1"><stop offset="0" stop-color="#666978"/><stop offset="1" stop-color="#777a8a"/></linearGradient></defs>
        <g stroke="#000" stroke-width="1" stroke-linejoin="round">
          <path d="M925 406L1269 509L1353 532L1040 835L1022 832L613 709Z" fill="#dce3ff"/>
          <path d="M583.500 565L896 262L913 267L599 569.500Z" fill="#dce3ff"/>
          <path d="M599 569.500L913 267L923 404L610 705.500Z" fill="#9498ac"/>
          <path d="M610 705.500L923 404L925.500 406.500L613 709Z" fill="#f0f3ff"/>
          <path d="M583.500 565L599 569.500L610 705.500L593.500 701Z" fill="#666978"/>
          <path d="M593.500 701L610 705.500Q611 708 613 709V725Q596 720 593.500 701Z" fill="url(#bend)"/>
          <path d="M613 709L1022.500 832V848.500L613 725Z" fill="#666978"/>
          <path d="M1040 835L1353 532V538L1350 543L1038 844Z" fill="#5f6272"/>
          <path d="M1019 753L1332 450L1347.500 454L1034.500 758Z" fill="#dce3ff"/>
          <path d="M1034.500 758L1347.500 454L1353 532L1040.500 835Z" fill="#9498ac"/>
          <path d="M1019 753L1034.500 758L1040.500 835L1024 830.500Z" fill="#666978"/>
          <path d="M1024 830.500L1040.500 835Q1041 851 1022.500 848V832Q1024 832 1024 830.500Z" fill="url(#bend)"/>
        </g>
      </svg>
      <svg class="triad" viewBox="0 0 60 64" role="img" aria-label="Axes">
        <path d="M23 35V18" stroke="#146414" stroke-width="4"/><path d="M18 20L22 9L26 20Z" fill="#2c8a2c" stroke="#0c480c"/>
        <path d="M23 35L42 40" stroke="#c01818" stroke-width="3"/><path d="M39 36L48 42L39 45Z" fill="#d82020" stroke="#901010"/>
        <path d="M23 35L14 43" stroke="#1010a0" stroke-width="4"/><path d="M6 50L9 41L16 47Z" fill="#1818d8" stroke="#080890"/>
        <text x="18" y="8" fill="#008c00">Y</text><text x="47" y="48" fill="#e00000">X</text><text x="1" y="57" fill="#0000e0">Z</text>
      </svg>
      <nav class="taskpane">
        <button class="active" aria-label="Resources"><svg class="i"><use href="#home"/></svg></button><button aria-label="Design library"><svg class="i"><use href="#books"/></svg></button><button aria-label="File explorer"><svg class="i"><use href="#folderopen"/></svg></button><button aria-label="View palette"><svg class="i"><use href="#palette"/></svg></button><button aria-label="Appearances"><svg class="i"><use href="#ball"/></svg></button><button aria-label="Custom properties"><svg class="i"><use href="#props"/></svg></button>
      </nav>
    </section>
  </div>
</main>

<div class="study-tabs">
  <div class="nav-btns"><button disabled aria-label="First"><svg class="n" viewBox="0 0 14 12"><path d="M4 2V10M10 2V10L5 6Z"/></svg></button><button disabled aria-label="Previous"><svg class="n" viewBox="0 0 14 12"><path d="M9 2V10L4 6Z"/></svg></button><button disabled aria-label="Next"><svg class="n" viewBox="0 0 14 12"><path d="M5 2V10L10 6Z"/></svg></button><button disabled aria-label="Last"><svg class="n" viewBox="0 0 14 12"><path d="M4 2V10L9 6ZM10 2V10"/></svg></button></div>
  <button class="active">Model</button><button class="t68">3D Views</button><button class="t108">Motion Study 1</button>
</div>

<div class="filterbar">
  <span class="grip"></span>
  <div class="lead">
    <button aria-label="Toggle filter" disabled><svg class="i"><use href="#f1"/></svg></button>
    <button aria-label="Clear filters" disabled><svg class="i"><use href="#f3"/></svg></button>
    <button aria-label="All filters"><svg class="i"><use href="#f3p"/></svg></button>
  </div>
  <span class="split"><button class="on" aria-label="Select"><svg class="i"><use href="#arrow"/></svg></button><button class="more" aria-label="Select options"><svg class="c"><use href="#caret"/></svg></button></span>
  <button class="inv" aria-label="Invert selection" disabled><svg class="i"><use href="#arrowsoff"/></svg></button>
  <span class="sep"></span>
  <div class="filters">
    <button aria-label="Vertices"><svg class="i"><use href="#s-point"/></svg><svg class="fn"><use href="#funnel"/></svg></button>
    <button aria-label="Edges"><svg class="i"><use href="#s-line"/></svg><svg class="fn"><use href="#funnel"/></svg></button>
    <button aria-label="Faces"><svg class="i"><use href="#s-rect"/></svg><svg class="fn"><use href="#funnel"/></svg></button>
    <button aria-label="Surface bodies"><svg class="i"><use href="#s-surf"/></svg><svg class="fn"><use href="#funnel"/></svg></button>
    <button aria-label="Solid bodies"><svg class="i"><use href="#s-solid"/></svg><svg class="fn"><use href="#funnel"/></svg></button>
    <button aria-label="Axes"><svg class="i"><use href="#s-axis"/></svg><svg class="fn"><use href="#funnel"/></svg></button>
    <button aria-label="Planes"><svg class="i"><use href="#s-plane"/></svg><svg class="fn"><use href="#funnel"/></svg></button>
    <button aria-label="Sketch points"><svg class="i"><use href="#s-sq"/></svg><svg class="fn"><use href="#funnel"/></svg></button>
    <button aria-label="Sketches"><svg class="i"><use href="#s-sketch"/></svg><svg class="fn"><use href="#funnel"/></svg></button>
    <button aria-label="Sketch segments"><svg class="i"><use href="#s-seg"/></svg><svg class="fn"><use href="#funnel"/></svg></button>
    <button aria-label="Midpoints"><svg class="i"><use href="#s-mid"/></svg><svg class="fn"><use href="#funnel"/></svg></button>
    <button aria-label="Center marks"><svg class="i"><use href="#s-center"/></svg><svg class="fn"><use href="#funnel"/></svg></button>
    <button aria-label="Centerlines"><svg class="i"><use href="#s-cl"/></svg><svg class="fn"><use href="#funnel"/></svg></button>
    <button aria-label="Dimensions"><svg class="i"><use href="#s-dim"/></svg><svg class="fn"><use href="#funnel"/></svg></button>
    <button aria-label="Surface finish"><svg class="i"><use href="#s-finish"/></svg><svg class="fn"><use href="#funnel"/></svg></button>
    <button aria-label="Geometric tolerances"><svg class="i i20"><use href="#s-gtol"/></svg><svg class="fn"><use href="#funnel"/></svg></button>
    <button aria-label="Notes"><svg class="i"><use href="#s-note"/></svg><svg class="fn"><use href="#funnel"/></svg></button>
    <button aria-label="Datum features"><svg class="i"><use href="#s-datum"/></svg><svg class="fn"><use href="#funnel"/></svg></button>
    <button aria-label="Weld symbols"><svg class="i"><use href="#s-weld"/></svg><svg class="fn"><use href="#funnel"/></svg></button>
    <button aria-label="Weld beads"><svg class="i"><use href="#s-bead"/></svg><svg class="fn"><use href="#funnel"/></svg></button>
    <button aria-label="Datum targets"><svg class="i"><use href="#s-dtarget"/></svg><svg class="fn"><use href="#funnel"/></svg></button>
    <button aria-label="Cosmetic threads"><svg class="i"><use href="#s-thread"/></svg><svg class="fn"><use href="#funnel"/></svg></button>
    <button aria-label="Blocks"><svg class="i"><use href="#s-block"/></svg><svg class="fn"><use href="#funnel"/></svg></button>
    <button aria-label="Center of mass"><svg class="i"><use href="#s-com"/></svg><svg class="fn"><use href="#funnel"/></svg></button>
    <button aria-label="Connection points"><svg class="i"><use href="#s-end"/></svg><svg class="fn"><use href="#funnel"/></svg></button>
    <button aria-label="Routing points"><svg class="i"><use href="#s-through"/></svg><svg class="fn"><use href="#funnel"/></svg></button>
  </div>
</div>

<footer class="status">
  <span class="edition">SOLIDWORKS Premium 2017 x64 Edition</span>
  <span class="gapcell"></span><span class="mode">Editing Part</span><span class="gapcell2"></span>
  <button class="units">MMGS<svg class="c up"><use href="#caret"/></svg></button>
  <button class="tagbtn" aria-label="Tags"><svg class="i"><use href="#tag"/></svg></button>
</footer>
<div class="taskbar"><span></span></div>
</body>
</html>
```
FILE: styles.css
```css
* { box-sizing: border-box; }
html, body { height: 100%; }
body {
  margin: 0;
  display: flex;
  flex-direction: column;
  background: #f7f7f7;
  color: #000;
  font: 11px/13px "Open Sans", "Noto Sans", sans-serif;
  overflow: hidden;
}
button, input {
  font: inherit;
  color: inherit;
  border: 0;
  padding: 0;
  margin: 0;
  background: none;
}
button { display: flex; align-items: center; justify-content: center; flex: none; white-space: nowrap; }
.sprite { position: absolute; width: 0; height: 0; }
.i { width: 18px; height: 18px; flex: none; display: block; }
.i20 { width: 20px; }
.c { width: 6px; height: 4px; flex: none; display: block; color: #444; }
.dot { width: 6px; height: 6px; border-radius: 50%; background: #d0d0d0; border: 1px solid #8c8c8c; }

/* title bar */
.titlebar { display: flex; align-items: center; height: 31px; flex: none; border-bottom: 1px solid #808080; position: relative; padding-left: 183px; }
.logo {
  position: absolute; left: 10px; top: 0; width: 145px; height: 35px; z-index: 2;
  display: flex; align-items: center; padding-left: 4px; gap: 3px;
  border: 1px solid #999; border-top: 0; outline: 1px solid #fff; outline-offset: -2px;
  background: linear-gradient(160deg, #fff 40%, #d8d8d8);
  color: #dd2a1e; font: italic 17px/20px "Open Sans", sans-serif;
}
.logo-mark { width: 30px; height: 30px; flex: none; margin-bottom: 4px; }
.menu { display: flex; gap: 16px; width: 310px; }
.pin { width: 22px; height: 30px; justify-content: flex-start; }
.quick { display: flex; align-items: center; height: 30px; border-left: 2px solid #bbb; padding-left: 12px; }
.q { width: 24px; }
.q.wide { width: 25px; }
.dd { width: 15px; }
.split { display: flex; height: 26px; border: 1px solid #777; }
.split .on { width: 25px; background: #b0b0b0; border-right: 1px solid #777; }
.split .more { width: 13px; }
.doc-title { flex: 1; margin: 0; text-align: center; font: inherit; }
.search { display: flex; align-items: center; width: 202px; height: 23px; border: 1px solid #c4c4c4; padding-left: 5px; gap: 1px; color: #555; }
.search input { width: 139px; height: 19px; background: #ebedf2; padding: 0 2px; }
.search input::placeholder { color: #555; opacity: 1; }
.search button { width: 22px; height: 20px; }
.search button:last-child { width: 10px; }
.wincontrols { display: flex; align-items: center; margin-left: 9px; color: #333; padding-right: 1px; }
.wincontrols button { width: 26px; }
.wincontrols .help { width: 18px; font-size: 18px; line-height: 20px; font-weight: 700; }
.wincontrols .dd { width: 15px; }

/* command ribbon */
.ribbon-row { display: flex; height: 87px; flex: none; align-items: flex-start; }
.ribbon { display: flex; width: 1548px; height: 87px; border-right: 1px solid #808080; border-bottom: 1px solid #808080; padding: 6px 0 2px; }
.group { display: flex; border-right: 1px solid #c4c4c4; }
.group.last { border: 0; padding-left: 1px; }
.g1 { padding-left: 6px; width: 268px; }
.g2 { padding-left: 4px; width: 269px; }
.g3 { width: 231px; }
.g4 { padding-left: 2px; width: 108px; }
.big { flex-direction: column; justify-content: flex-start; padding-top: 13px; text-align: center; align-self: stretch; }
.big.drop { padding-top: 5px; padding-bottom: 9px; }
.big.drop .c { margin-top: auto; }
.w60 { width: 60px; } .w51 { width: 51px; } .w45 { width: 45px; } .w36 { width: 36px; }
.stack { display: grid; grid-template-rows: repeat(3, 26px); padding-left: 2px; }
.stack button { justify-content: flex-start; gap: 7px; }
.g2 .stack, .g3 .stack { padding-left: 5px; }
.s64 { width: 64px; }
.capture { display: flex; align-items: center; width: 104px; height: 33px; margin-left: 5px; border: 1px solid #808080; border-top: 0; padding-left: 3px; }
.capture button { width: 27px; }
.capture .grip { margin-right: 6px; }
.grip { width: 4px; height: 26px; flex: none; background: repeating-linear-gradient(#999 0 2px, transparent 2px 4px); }

/* work area */
.work { flex: 1; min-height: 0; display: flex; flex-direction: column; position: relative; background: #fff; }
.tabs { display: flex; height: 22px; flex: none; }
.tabs button { height: 22px; background: #d3d3d3; border: 1px solid #808080; border-width: 0 1px 1px 0; color: #222; }
.tabs .active { background: #f7f7f7; font-weight: 700; color: #333; }
.t63 { width: 64px; } .t56 { width: 56px; } .t60 { width: 60px; } .t66 { width: 66px; } .t133 { width: 133px; } .t117 { width: 117px; }
.heads-up { position: absolute; z-index: 2; left: 242px; right: 8px; top: 0; height: 30px; display: flex; align-items: center; justify-content: center; pointer-events: none; }
.heads-up button { width: 26px; pointer-events: auto; }
.heads-up .dd { width: 14px; }
.heads-up .c { color: #888; }
.doc-controls { position: absolute; z-index: 3; right: 7px; top: 0; height: 30px; display: flex; align-items: center; color: #a0a0a0; }
.doc-controls button { width: 26px; }
.split-view { display: flex; flex: 1; min-height: 0; }
.panel { width: 242px; flex: none; display: flex; flex-direction: column; background: #f7f7f7; border-right: 1px solid #808080; position: relative; padding-right: 2px; }
.panel-grip { height: 16px; margin-top: 2px; display: flex; align-items: center; justify-content: center; border: 1px solid #c8c8c8; border-width: 1px 0; flex: none; }
.panel-tabs { display: flex; margin-top: 4px; height: 26px; flex: none; border-bottom: 1px solid #b8b8b8; }
.panel-tabs button { width: 40px; height: 26px; background: #d3d3d3; border: 1px solid #808080; border-left: 0; }
.panel-tabs .active { background: #f7f7f7; border-bottom-color: #f7f7f7; }
.panel-tabs .next { border: 0; background: none; margin-left: auto; width: 20px; height: 24px; }
.filter { display: flex; align-items: center; height: 26px; flex: none; margin: 0 1px 0 3px; border: 1px solid #c4c4c4; padding-left: 2px; }
.filter input { flex: 1; min-width: 0; height: 22px; }
.tree { list-style: none; margin: 0; padding: 0; flex: none; }
.tree li { display: flex; align-items: center; height: 22px; gap: 5px; padding-left: 25px; white-space: pre; }
.tree .root { padding-left: 3px; gap: 4px; }
.tree .kids { padding-left: 8px; }
.tree .kids::before { content: ""; border: 4px solid transparent; border-left: 5px solid #666; border-right: 0; margin-right: 7px; }
.tree .open { padding-left: 6px; }
.tree .open::before { border: 4px solid transparent; border-top: 5px solid #555; border-bottom: 0; margin-right: 6px; }
.tree .off { color: #808080; }
.tree .child { padding-left: 31px; gap: 4px; }
.rollback { height: 3px; background: #2f8fd0; border-bottom: 1px solid #1a1a90; flex: none; }
.hscroll { display: flex; height: 16px; background: #f0f0f0; margin-top: auto; margin-bottom: 1px; flex: none; }
.hscroll button { width: 16px; }
.track { flex: 1; }
.thumb { display: block; height: 16px; width: 55%; background: #cdcdcd; }
.handle { position: absolute; right: -8px; top: 405px; width: 8px; height: 39px; background: #f7f7f7; border: 1px solid #808080; border-left: 0; display: flex; align-items: center; z-index: 2; }
.viewport { flex: 1; min-width: 0; position: relative; background: #fff; }
.model { position: absolute; inset: 0; width: 100%; height: 100%; }
.triad { position: absolute; left: 17px; bottom: 29px; width: 60px; height: 64px; font: 10px "Liberation Sans", sans-serif; }
.taskpane { position: absolute; right: 0; top: 28px; border: 1px solid #808080; border-width: 1px 0 0 1px; }
.taskpane button { width: 25px; height: 24px; background: #d3d3d3; border-bottom: 1px solid #808080; padding-right: 1px; }
.taskpane .active { background: #fff; }

/* bottom bars */
.study-tabs { display: flex; height: 15px; flex: none; border-top: 1px solid #808080; border-left: 2px solid #9cc0c0; border-right: 1px solid #9cc0c0; padding-left: 25px; }
.study-tabs > button { height: 14px; line-height: 12px; padding-bottom: 2px; background: #d3d3d3; border-right: 1px solid #808080; }
.study-tabs > .active { background: #f7f7f7; font-weight: 700; width: 57px; }
.t68 { width: 68px; }
.study-tabs > .t108 { width: 108px; justify-content: flex-start; padding-left: 10px; }
.nav-btns { display: flex; border-top: 1px solid #222; background: #999; padding: 1px; width: 65px; margin-top: -1px; }
.nav-btns button { flex: 1; height: 13px; background: #b0b0b0; border: 1px solid #888; }
.n { width: 14px; height: 12px; fill: #888; stroke: #888; }
.filterbar { display: flex; align-items: center; height: 34px; flex: none; padding-left: 3px; border-bottom: 1px solid #808080; }
.lead { display: flex; padding: 0 1px 0 6px; }
.lead button { width: 27px; }
.filterbar .split .on { width: 27px; }
.inv { width: 27px; }
.filterbar .sep { width: 1px; height: 22px; background: #808080; margin: 0 10px 0 2px; }
.filters { display: flex; height: 32px; border-right: 1px solid #808080; padding-right: 1px; }
.filters button { width: 27px; position: relative; justify-content: flex-start; height: 32px; }
.fn { position: absolute; left: 11px; bottom: 5px; width: 6px; height: 8px; }
.status { display: flex; align-items: center; height: 18px; flex: none; padding: 0 2px 0 1px; }
.edition { flex: 1; }
.gapcell, .gapcell2 { width: 9px; height: 16px; border: 1px solid #d0d0d0; border-width: 0 1px; }
.gapcell2 { width: 17px; }
.mode { width: 70px; padding-left: 4px; }
.units { width: 94px; gap: 20px; justify-content: flex-end; }
.up { transform: rotate(180deg); }
.tagbtn { width: 18px; margin-left: 65px; height: 18px; }
.taskbar { height: 2px; flex: none; background: #3a3838; padding-left: 48px; }
.taskbar span { display: block; width: 288px; height: 2px; background: #b8b8b8; }
```
